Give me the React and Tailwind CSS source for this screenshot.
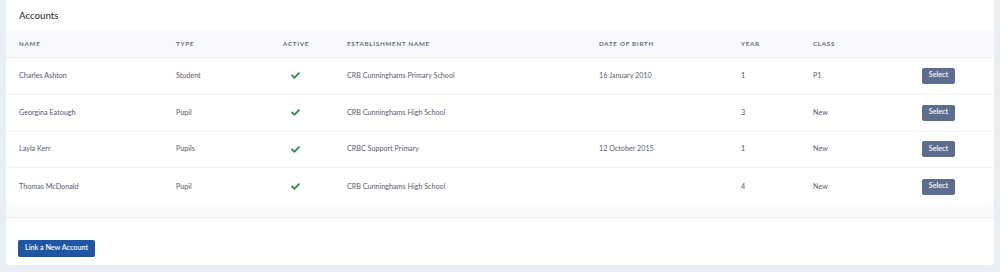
import React from "react";
import { FaCheck } from "react-icons/fa";

const rows = [
  { name: "Charles Ashton", type: "Student", est: "CRB Cunninghams Primary School", dob: "16 January 2010", year: "1", cls: "P1" },
  { name: "Georgina Eatough", type: "Pupil", est: "CRB Cunninghams High School", dob: "", year: "3", cls: "New" },
  { name: "Layla Kerr", type: "Pupils", est: "CRBC Support Primary", dob: "12 October 2015", year: "1", cls: "New" },
  { name: "Thomas McDonald", type: "Pupil", est: "CRB Cunninghams High School", dob: "", year: "4", cls: "New" },
];

const cols = "grid grid-cols-[157px_107px_64px_252px_142px_72px_109px_1fr] items-center pl-[13px]";

export default function App() {
  return (
    <div className="w-[1000px] h-[272px] bg-[#e9edf5] px-[6px] overflow-hidden" style={{ fontFamily: "Lato, 'Liberation Sans', sans-serif" }}>
      <div className="bg-white rounded-b-[4px] h-[265px] flex flex-col">
        <div className="h-[30px] flex items-center pl-[13px] text-[9.7px] font-medium text-[#2f343a]">Accounts</div>
        <div className="bg-white rounded-b-[5px] shadow-[0_1px_2px_rgba(0,0,0,0.05)] mr-[1px]">
          <div className={`${cols} h-[28px] bg-[#f8f9fc] border-b border-[#eef0f4] text-[6.2px] font-bold tracking-[0.12em] text-[#656b76] uppercase`}>
            <div>Name</div>
            <div>Type</div>
            <div className="w-[25px] text-center">Active</div>
            <div>Establishment Name</div>
            <div>Date of Birth</div>
            <div>Year</div>
            <div>Class</div>
            <div></div>
          </div>
          {rows.map((r, i) => (
            <div key={i} className={`${cols} h-[36.75px] text-[7.2px] text-[#5a606c] ${i < rows.length - 1 ? "border-b border-[#f0f2f6]" : ""}`}>
              <div className="text-[#555a70] pt-[1px]">{r.name}</div>
              <div className="text-[#625a5a] pt-[1px]">{r.type}</div>
              <div className="w-[25px] flex justify-center">
                <FaCheck className="w-[11px] h-[9px] text-[#2f8a46]" />
              </div>
              <div className="pt-[1px]">{r.est}</div>
              <div className="pt-[1px]">{r.dob}</div>
              <div className="text-[#4a5270] pt-[1px]">{r.year}</div>
              <div className="pt-[1px]">{r.cls}</div>
              <div>
                <button className="w-[33px] h-[16px] rounded-[2px] bg-[#5d6d8d] text-white text-[7.2px] font-semibold flex items-center justify-center">Select</button>
              </div>
            </div>
          ))}
        </div>
        <div className="h-[13px] bg-[#f9fafb] border-b border-[#eef0f4]"></div>
        <div className="pl-[12px] pt-[22px]">
          <button className="h-[17px] w-[77px] rounded-[2px] bg-[#1f55a3] text-white text-[7.2px] font-semibold flex items-center justify-center">Link a New Account</button>
        </div>
      </div>
    </div>
  );
}
